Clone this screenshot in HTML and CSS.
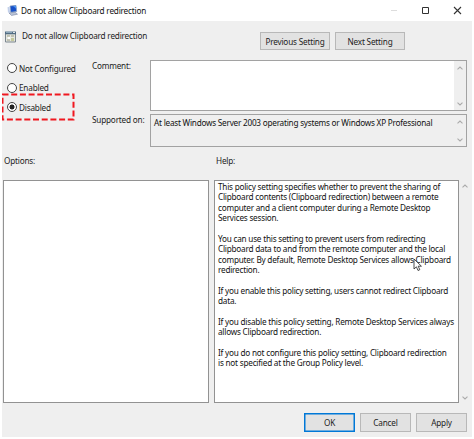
FILE: index.html
```
<!DOCTYPE html>
<html lang="en">
<head>
<meta charset="utf-8">
<title>Do not allow Clipboard redirection</title>
<link rel="stylesheet" href="styles.css">
</head>
<body>
<div class="window">
  <header class="titlebar">
    <svg class="app-icon" width="11" height="11" viewBox="0 0 11 11"><path d="M3 1l6-.7.7 6.2-6 .8z" fill="#1750c8" stroke="#8fa3c0" stroke-width=".7"/><path d="M6 1l3-.3.3 3z" fill="#4c94f0"/><path d="M.5 2.2l2-.4.5 5.4-2 .5z" fill="#c2d0ea"/><path d="M2 8l6-.8 2.5 2-6 1.3z" fill="#bac4d6" stroke="#68779a" stroke-width=".5"/></svg>
    <span class="title">Do not allow Clipboard redirection</span>
    <svg class="controls" width="72" height="9" viewBox="0 0 72 9"><path d="M0 4.5h6" stroke="#ddd"/><path d="M31.5 1.5h6v6h-6z" fill="none" stroke="#333"/><path d="M63 1l7 7M70 1l-7 7" stroke="#333" stroke-width="1.1"/></svg>
  </header>
  <main>
    <section class="heading">
      <svg width="12" height="12" viewBox="0 0 12 12"><path d="M.5 1.5h10v9.5h-10z" fill="#e5e7df" stroke="#7c8790"/><path d="M0 .5h11v2.8H0z" fill="#526c82"/><path d="M1 1.2h6" stroke="#a8c3d4"/><path d="M8 1.5h2" stroke="#dfe6e8"/><path d="M2 5h3M6 5h3M2 9h3" stroke="#999a83"/><circle cx="4" cy="7" r="1.3" fill="#fff"/><path d="M6 7h3v3H6z" fill="#c4c99c"/></svg>
      <h1>Do not allow Clipboard redirection</h1>
      <button class="btn nav">Previous Setting</button>
      <button class="btn nav">Next Setting</button>
    </section>
    <section class="state">
      <div class="radios">
        <label><i class="radio"></i>Not Configured</label>
        <label><i class="radio"></i>Enabled</label>
        <label><i class="radio checked"></i>Disabled</label>
        <svg class="highlight" width="74" height="28" viewBox="0 0 74 28"><path d="M1.5 1.5h71v25h-71z" fill="none" stroke="#f01820" stroke-width="2" stroke-dasharray="6 2.7"/></svg>
      </div>
      <div class="fields">
        <span class="label">Comment:</span>
        <div class="field comment"><div></div><div class="scroll"><svg width="6" height="4"><path d="M.5 3.3L3 1l2.5 2.3" /></svg><svg width="6" height="4"><path d="M.5 .7L3 3 5.5.7" /></svg></div></div>
        <span class="label">Supported on:</span>
        <div class="field supported"><div class="support-text">At least Windows Server 2003 operating systems or Windows XP Professional</div><div class="scroll"><svg width="6" height="4"><path d="M.5 3.3L3 1l2.5 2.3" /></svg><svg width="6" height="4"><path d="M.5 .7L3 3 5.5.7" /></svg></div></div>
      </div>
    </section>
    <section class="captions"><span>Options:</span><span>Help:</span></section>
    <section class="panels">
      <div class="panel"></div>
      <div class="panel help">
        <p><span>This policy setting specifies whether to prevent the sharing of</span><span>Clipboard contents (Clipboard redirection) between a remote</span><span>computer and a client computer during a Remote Desktop</span><span>Services session.</span></p>
        <p><span>You can use this setting to prevent users from redirecting</span><span>Clipboard data to and from the remote computer and the local</span><span>computer. By default, Remote Desktop Services allows Clipboard</span><span>redirection.</span></p>
        <p><span>If you enable this policy setting, users cannot redirect Clipboard</span><span>data.</span></p>
        <p><span>If you disable this policy setting, Remote Desktop Services always</span><span>allows Clipboard redirection.</span></p>
        <p><span>If you do not configure this policy setting, Clipboard redirection</span><span>is not specified at the Group Policy level.</span></p>
        <svg class="cursor" width="10" height="14" viewBox="0 0 10 14"><path d="M1 1v10l2.4-2.2L5 12.5l1.8-.8L5.2 8.2h3.2z" fill="#fff" stroke="#222" stroke-width=".8"/></svg>
      </div>
      <div class="scroll outer"><svg width="6" height="4"><path d="M.5 3.3L3 1l2.5 2.3" /></svg><svg width="6" height="4"><path d="M.5 .7L3 3 5.5.7" /></svg></div>
    </section>
    <footer><button class="btn ok">OK</button><button class="btn">Cancel</button><button class="btn">Apply</button></footer>
  </main>
</div>
</body>
</html>
```
FILE: styles.css
```
* { box-sizing: border-box; }
body { margin: 0; background: #fff; font: 8.2px/11px "Noto Sans", "Open Sans", sans-serif; letter-spacing: -.19px; color: #222; }
.window { width: 474px; height: 439px; background: #fff; }
.titlebar { height: 21px; padding: 0 12px 0 7px; display: flex; align-items: center; color: #111; }
.app-icon { margin-right: 3px; }
.title { white-space: nowrap; }
.controls { margin-left: auto; margin-right: -1px; }
main { height: 416px; margin: 0 2px; background: #efefef; padding-left: 1px; overflow: hidden; }
.heading { display: flex; align-items: flex-start; height: 39px; padding: 10px 0 0 2px; }
h1 { margin: -1px 0 0 5px; width: 238px; font: inherit; line-height: 11px; white-space: nowrap; }
.btn { width: 51px; height: 19px; padding: 0; border: 1px solid #b8b8b8; border-radius: 0; background: #e2e2e2; color: #222; font: inherit; letter-spacing: inherit; white-space: nowrap; }
.nav { width: 70px; height: 18px; margin: 1px 5px 0 0; }
.state { display: flex; height: 94px; }
.radios { position: relative; width: 89px; padding: 2.5px 0 0 4px; }
.radios label { display: flex; align-items: center; height: 11px; margin-bottom: 8.5px; white-space: nowrap; }
.radio { width: 10px; height: 10px; margin-right: 2px; border: 1px solid #444; border-radius: 50%; background: #fff; flex: none; }
.checked { background: radial-gradient(circle, #222 0 2.2px, #fff 2.8px); }
.highlight { position: absolute; left: -2px; top: 33px; }
.fields { display: grid; grid-template-columns: 58px 317px; grid-template-rows: 51px 33px; row-gap: 3px; }
.label { white-space: nowrap; }
.field { display: grid; grid-template-columns: 1fr 12px; border: 1px solid #a2a2a2; background: #fff; }
.field.supported { background: #efefef; }
.support-text { padding: 2px 3px; white-space: nowrap; color: #111; letter-spacing: -.23px; }
.scroll { display: flex; flex-direction: column; align-items: center; justify-content: space-between; padding: 5px 0 4px; background: #efefef; }
.scroll path { fill: none; stroke: #aaa; stroke-width: 1.1; }
.captions { height: 26px; display: grid; grid-template-columns: 212px 1fr; padding: 1px 0 0 1px; }
.panels { display: grid; grid-template-columns: 206px 5px 245px 12px; height: 223px; }
.panel { border: 1px solid #929292; background: #fff; }
.help { position: relative; grid-column: 3; padding: 1px 0 0 3px; color: #111; letter-spacing: -.22px; }
.outer { padding: 4px 0 3px; }
.help p { margin: 0 0 10.36px; line-height: 10.36px; }
.help p span { display: block; white-space: nowrap; }
.cursor { position: absolute; left: 198px; top: 77px; }
footer { display: flex; justify-content: flex-end; gap: 5px; padding: 10px 5px 0 0; }
.ok { border: 1.5px solid #0078d7; box-shadow: inset 0 0 0 .5px #0078d7; }
```
